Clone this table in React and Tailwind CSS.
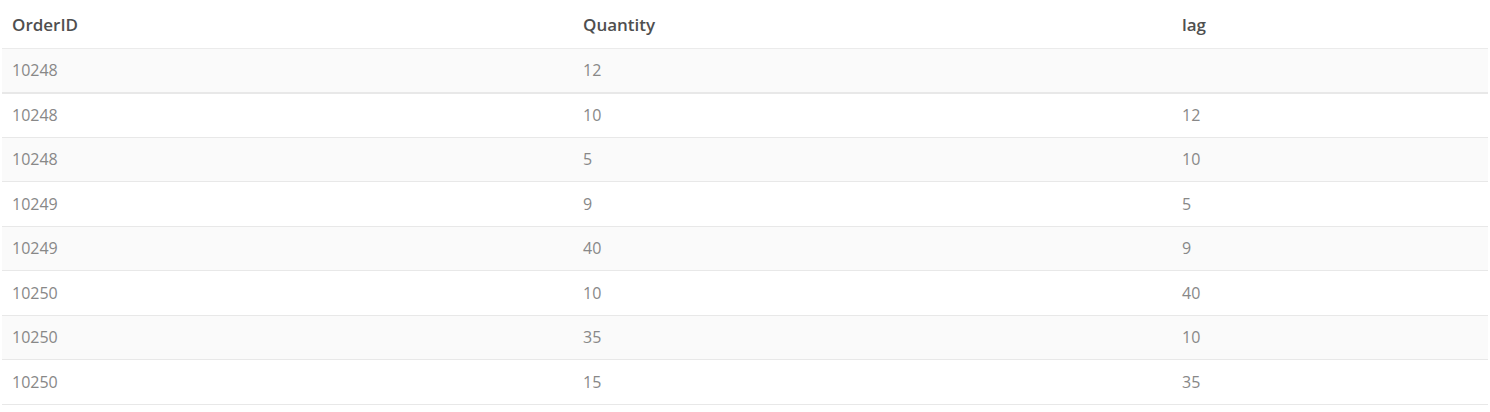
import React from "react";

const rows = [
  ["10248", "12", ""],
  ["10248", "10", "12"],
  ["10248", "5", "10"],
  ["10249", "9", "5"],
  ["10249", "40", "9"],
  ["10250", "10", "40"],
  ["10250", "35", "10"],
  ["10250", "15", "35"],
];

const App = () => {
  return (
    <div
      className="min-h-screen bg-white px-[2px]"
      style={{ fontFamily: '"Open Sans", "Liberation Sans", sans-serif' }}
    >
      <table className="w-full border-collapse text-[16px]">
        <thead>
          <tr className="border-b border-[#ebebeb]">
            <th className="h-[48px] w-[571px] px-[10px] pt-[2px] text-left text-[17px] font-semibold text-[#4f4f4f]">OrderID</th>
            <th className="h-[48px] w-[599px] px-[10px] pt-[2px] text-left text-[17px] font-semibold text-[#4f4f4f]">Quantity</th>
            <th className="h-[48px] px-[10px] pt-[2px] text-left text-[17px] font-semibold text-[#4f4f4f]">lag</th>
          </tr>
        </thead>
        <tbody>
          {rows.map((r, i) => (
            <tr
              key={i}
              className={`${i % 2 === 0 ? "bg-[#fafafa]" : "bg-white"} ${
                i === 0 ? "border-b-2" : "border-b"
              } border-[#e8e8e8]`}
            >
              {r.map((c, j) => (
                <td key={j} className="h-[44.5px] px-[10px] text-[#888888]">
                  {c}
                </td>
              ))}
            </tr>
          ))}
        </tbody>
      </table>
    </div>
  );
};

export default App;
